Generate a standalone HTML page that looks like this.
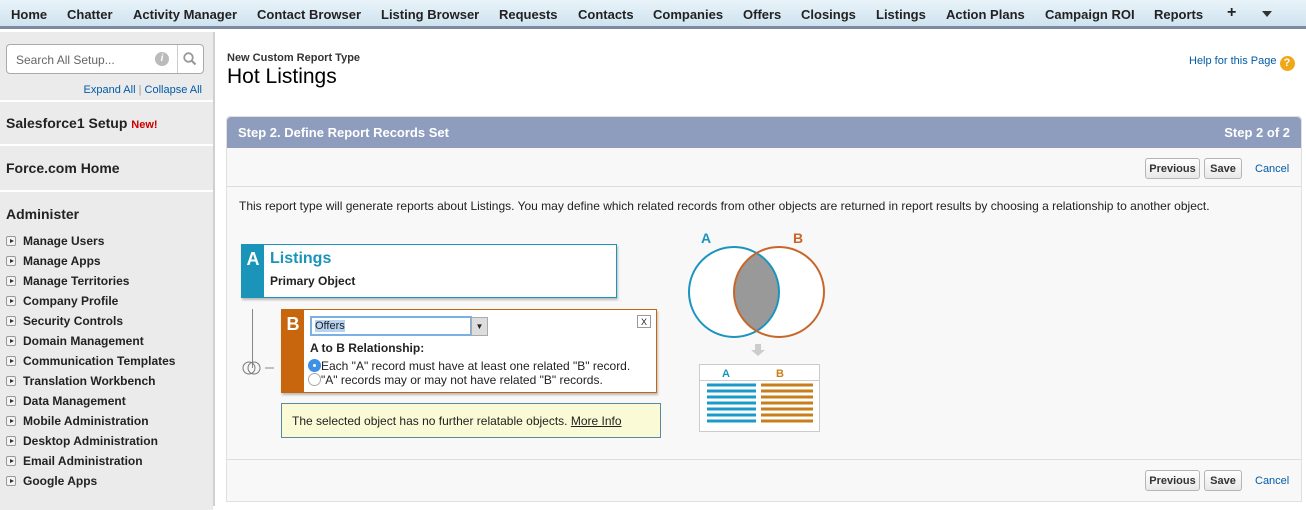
<!DOCTYPE html>
<html><head><style>
*{margin:0;padding:0;box-sizing:border-box}
body{width:1306px;height:506px;overflow:hidden;font-family:"Liberation Sans",Arial,sans-serif;background:#fff;position:relative;font-size:12px;color:#222}
.nav{position:absolute;left:0;top:0;width:1306px;height:29px;background:linear-gradient(#e9f3f9,#cfe3ef);border-bottom:3px solid #7d8aa0}
.nav span{position:absolute;top:7px;font-weight:bold;font-size:13px;color:#222}
.side{position:absolute;left:0;top:32px;width:215px;height:474px;background:#ebebeb;border-right:2px solid #d0d0d0}
.search{position:absolute;left:6px;top:12px;width:198px;height:30px;background:#fff;border:1px solid #aaa;border-radius:4px}
.sec{position:absolute;left:0;width:213px;background:#ebebeb;border-top:2px solid #fff;font-weight:bold;font-size:14px;color:#222;padding-left:6px}
.item{position:absolute;left:6px;font-weight:bold;font-size:12px;color:#222}
.item i{display:inline-block;width:10px;height:10px;border:1px solid #999;border-radius:2px;background:#f4f4f4;margin-right:7px;vertical-align:-1px;position:relative}
.item i:after{content:"";position:absolute;left:3px;top:2px;border-left:4px solid #333;border-top:2.5px solid transparent;border-bottom:2.5px solid transparent}
.panel{position:absolute;left:226px;top:116px;width:1076px;height:386px;background:#f8f8f8;border:1px solid #e0e0e0;border-radius:4px 4px 0 0}
.hdr{height:31px;background:#8e9dbe;color:#fff;font-weight:bold;font-size:13px;padding:8px 11px;border-radius:4px 4px 0 0}
.btn{position:absolute;height:21px;border:1px solid #b5b5b5;border-radius:3px;background:linear-gradient(#fff,#e8e8e8);font-weight:bold;font-size:11px;padding:4px 3px;color:#333;text-align:center}
a{color:#015ba7;text-decoration:none}
</style></head><body>
<div class="nav">
<span style="left:11px">Home</span><span style="left:67px">Chatter</span><span style="left:133px">Activity Manager</span><span style="left:257px">Contact Browser</span><span style="left:381px">Listing Browser</span><span style="left:499px">Requests</span><span style="left:578px">Contacts</span><span style="left:653px">Companies</span><span style="left:743px">Offers</span><span style="left:801px">Closings</span><span style="left:876px">Listings</span><span style="left:946px">Action Plans</span><span style="left:1045px">Campaign ROI</span><span style="left:1154px">Reports</span><span style="left:1227px;font-size:16px;top:4px">+</span><span style="left:1262px;top:11px;width:0;height:0;border-left:5px solid transparent;border-right:5px solid transparent;border-top:6px solid #333"></span>
</div>
<div class="side">
<div class="search"><span style="position:absolute;left:9px;top:8px;font-size:12px;color:#666">Search All Setup...</span><span style="position:absolute;left:148px;top:7px;width:14px;height:14px;border-radius:50%;background:#bbb;color:#fff;font-size:10px;text-align:center;font-weight:bold;font-style:italic;line-height:14px">i</span><span style="position:absolute;left:170px;top:0;width:1px;height:28px;background:#ccc"></span><svg style="position:absolute;left:176px;top:7px" width="14" height="14"><circle cx="5.5" cy="5.5" r="4.3" fill="none" stroke="#999" stroke-width="1.8"/><path d="M8.5 8.5l4 4" stroke="#999" stroke-width="2.2"/></svg></div>
<div style="position:absolute;right:11px;top:52px;font-size:11px"><a>Expand All</a> <span style="color:#999">|</span> <a>Collapse All</a></div>
<div class="sec" style="top:68px;height:44px;padding-top:13px">Salesforce1 Setup <span style="color:#c00;font-size:11px">New!</span></div>
<div class="sec" style="top:112px;height:46px;padding-top:14px">Force.com Home</div>
<div class="sec" style="top:158px;height:320px;padding-top:14px">Administer</div>
<div class="item" style="top:202px"><i></i>Manage Users</div>
<div class="item" style="top:222px"><i></i>Manage Apps</div>
<div class="item" style="top:242px"><i></i>Manage Territories</div>
<div class="item" style="top:262px"><i></i>Company Profile</div>
<div class="item" style="top:282px"><i></i>Security Controls</div>
<div class="item" style="top:302px"><i></i>Domain Management</div>
<div class="item" style="top:322px"><i></i>Communication Templates</div>
<div class="item" style="top:342px"><i></i>Translation Workbench</div>
<div class="item" style="top:362px"><i></i>Data Management</div>
<div class="item" style="top:382px"><i></i>Mobile Administration</div>
<div class="item" style="top:402px"><i></i>Desktop Administration</div>
<div class="item" style="top:422px"><i></i>Email Administration</div>
<div class="item" style="top:442px"><i></i>Google Apps</div>
</div>
<div style="position:absolute;left:227px;top:52px;font-size:11px;font-weight:bold;color:#333">New Custom Report Type</div>
<div style="position:absolute;left:227px;top:65px;font-size:21px;color:#000">Hot Listings</div>
<div style="position:absolute;left:1189px;top:55px;font-size:11px"><a>Help for this Page</a> <span style="display:inline-block;width:15px;height:15px;border-radius:50%;background:#f0a818;color:#fff;font-weight:bold;text-align:center;line-height:15px;font-size:11px;vertical-align:-2px">?</span></div>
<div class="panel">
<div class="hdr">Step 2. Define Report Records Set<span style="float:right">Step 2 of 2</span></div>
<div class="btn" style="left:918px;top:41px;width:55px">Previous</div><div class="btn" style="left:977px;top:41px;width:38px">Save</div><a style="position:absolute;left:1028px;top:46px;font-size:11px">Cancel</a>
<div style="position:absolute;left:0;top:69px;width:1074px;border-top:1px solid #ddd"></div>
<div style="position:absolute;left:12px;top:82px;font-size:12px;color:#222">This report type will generate reports about Listings. You may define which related records from other objects are returned in report results by choosing a relationship to another object.</div>
<div style="position:absolute;left:14px;top:127px;width:376px;height:54px;background:#fff;border:1px solid #1a94b8;box-shadow:1px 2px 2px #bbb"><div style="position:absolute;left:0;top:0;width:22px;height:52px;background:#1a94b8;color:#fff;font-weight:bold;font-size:18px;text-align:center;padding-top:4px">A</div><div style="position:absolute;left:28px;top:5px;color:#1a94b8;font-weight:bold;font-size:16px">Listings</div><div style="position:absolute;left:28px;top:29px;font-weight:bold;font-size:12px">Primary Object</div></div>
<div style="position:absolute;left:25px;top:192px;width:1px;height:59px;background:#888"></div>
<svg style="position:absolute;left:13px;top:243px" width="36" height="16"><circle cx="9" cy="8" r="6" fill="none" stroke="#777"/><circle cx="14" cy="8" r="6" fill="none" stroke="#777"/><path d="M25 8h9" stroke="#888"/></svg>
<div style="position:absolute;left:54px;top:192px;width:376px;height:84px;background:#fff;border:1px solid #c8660e;box-shadow:1px 2px 2px #bbb"><div style="position:absolute;left:0;top:0;width:22px;height:82px;background:#c8660e;color:#fff;font-weight:bold;font-size:18px;text-align:center;padding-top:4px">B</div>
<div style="position:absolute;left:28px;top:6px;width:162px;height:20px;border:2px solid #7ab0e6;background:#fff;font-size:11px;padding:2px 3px"><span style="background:#b6d3f2">Offers</span></div><div style="position:absolute;left:189px;top:7px;width:17px;height:19px;background:#ddd;border:1px solid #aaa;font-size:8px;text-align:center;line-height:18px">&#9660;</div>
<div style="position:absolute;left:355px;top:5px;width:14px;height:13px;border:1px solid #999;font-size:9px;text-align:center;line-height:12px">X</div>
<div style="position:absolute;left:28px;top:31px;font-weight:bold;font-size:12px">A to B Relationship:</div>
<div style="position:absolute;left:26px;top:49px;font-size:12px;line-height:14px"><span style="display:inline-block;width:13px;height:13px;border-radius:50%;background:#3d8fe8;vertical-align:-2px;position:relative"><span style="position:absolute;left:5px;top:5px;width:3px;height:3px;background:#fff;border-radius:50%"></span></span>Each "A" record must have at least one related "B" record.<br><span style="display:inline-block;width:13px;height:13px;border-radius:50%;border:1px solid #aaa;background:#fff;vertical-align:-2px"></span>"A" records may or may not have related "B" records.</div></div>
<div style="position:absolute;left:54px;top:286px;width:380px;height:35px;background:#fafad6;border:1px solid #5a8aa0;font-size:12px;padding:10px 10px">The selected object has no further relatable objects. <u>More Info</u></div>
<svg style="position:absolute;left:454px;top:105px" width="150" height="220">
<circle cx="53" cy="70" r="45" fill="#fff"/><circle cx="98" cy="70" r="45" fill="#fff"/>
<path d="M75.5 31 A45 45 0 0 1 75.5 109 A45 45 0 0 1 75.5 31Z" fill="#999"/>
<circle cx="53" cy="70" r="45" fill="none" stroke="#1a94c0" stroke-width="2"/><circle cx="98" cy="70" r="45" fill="none" stroke="#c8662a" stroke-width="2"/>
<text x="20" y="21" fill="#1a94c0" font-weight="bold" font-size="14" font-family="Liberation Sans">A</text><text x="112" y="21" fill="#c8662a" font-weight="bold" font-size="14" font-family="Liberation Sans">B</text>
<path d="M74 122h6v6h4l-7 6-7-6h4z" fill="#ccc"/>
<rect x="18.5" y="142.5" width="120" height="67" fill="#fff" stroke="#ccc"/><path d="M18.5 158.5h120" stroke="#ccc"/>
<text x="41" y="155" fill="#1a94c0" font-weight="bold" font-size="11" font-family="Liberation Sans">A</text><text x="95" y="155" fill="#c87e1a" font-weight="bold" font-size="11" font-family="Liberation Sans">B</text>
<g stroke="#1a9ac8" stroke-width="3"><path d="M26 163h49M26 169h49M26 175h49M26 181h49M26 187h49M26 193h49M26 199h49"/></g>
<g stroke="#c87e1a" stroke-width="3"><path d="M80 163h52M80 169h52M80 175h52M80 181h52M80 187h52M80 193h52M80 199h52"/></g>
</svg>
<div style="position:absolute;left:0;top:342px;width:1074px;border-top:1px solid #ddd"></div>
<div class="btn" style="left:918px;top:353px;width:55px">Previous</div><div class="btn" style="left:977px;top:353px;width:38px">Save</div><a style="position:absolute;left:1028px;top:358px;font-size:11px">Cancel</a>
</div>
</body></html>
